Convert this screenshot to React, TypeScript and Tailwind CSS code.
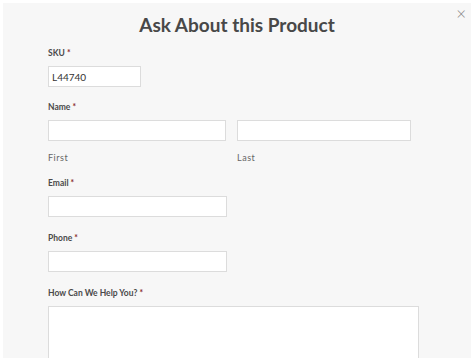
import React from 'react';

interface FieldLabelProps {
  text: string;
}

const FieldLabel: React.FC<FieldLabelProps> = ({ text }) => (
  <label className="block text-[8.5px] font-bold leading-[12px] text-[#4a4a4a]">
    {text} <span className="text-[#8a2b2b]">*</span>
  </label>
);

const inputCls = 'block h-[21px] border border-[#dcdcdc] bg-white px-[3px] text-[10px] text-[#333] outline-none';

const App: React.FC = () => {
  return (
    <div className="h-[361px] w-[474px] overflow-hidden bg-white p-[3px] font-['Lato','Liberation_Sans',sans-serif]">
      <div className="relative h-[355px] w-[468px] overflow-hidden bg-[#f7f7f7]">
        <button className="absolute right-[5px] top-[2px] text-[17px] font-light leading-none text-[#888]">×</button>
        <h1 className="pt-[8px] text-center text-[19px] font-bold leading-[28px] text-[#484848]">
          Ask About this Product
        </h1>

        <div className="pl-[45px] pt-[8px]">
          <FieldLabel text="SKU" />
          <input className={`${inputCls} mt-[7px] w-[93px]`} defaultValue="L44740" />

          <div className="mt-[14px]">
            <FieldLabel text="Name" />
            <div className="mt-[7px] flex gap-[11px]">
              <div>
                <input className={`${inputCls} w-[178px]`} />
                <div className="mt-[11px] text-[9px] leading-[12px] tracking-[0.06em] text-[#666]">First</div>
              </div>
              <div>
                <input className={`${inputCls} w-[174px]`} />
                <div className="mt-[11px] text-[9px] leading-[12px] tracking-[0.06em] text-[#666]">Last</div>
              </div>
            </div>
          </div>

          <div className="mt-[13px]">
            <FieldLabel text="Email" />
            <input className={`${inputCls} mt-[7px] w-[179px]`} />
          </div>

          <div className="mt-[15px]">
            <FieldLabel text="Phone" />
            <input className={`${inputCls} mt-[7px] w-[179px]`} />
          </div>

          <div className="mt-[15px]">
            <FieldLabel text="How Can We Help You?" />
            <textarea className="mt-[7px] block h-[80px] w-[371px] resize-none border border-[#dcdcdc] bg-white outline-none" />
          </div>
        </div>
      </div>
    </div>
  );
};

export default App;
